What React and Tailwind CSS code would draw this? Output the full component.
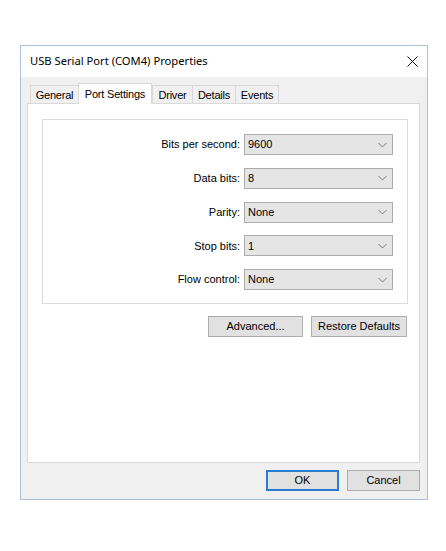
const ROWS = [
  { label: 'Bits per second:', value: '9600' },
  { label: 'Data bits:', value: '8' },
  { label: 'Parity:', value: 'None' },
  { label: 'Stop bits:', value: '1' },
  { label: 'Flow control:', value: 'None' },
];

const TABS = [
  { name: 'General', w: 'w-[48px]' },
  { name: 'Port Settings', w: 'w-[74px]' },
  { name: 'Driver', w: 'w-[40px]' },
  { name: 'Details', w: 'w-[43px]' },
  { name: 'Events', w: 'w-[44px]' },
];

function Chevron() {
  return (
    <svg width="9" height="6" viewBox="0 0 9 6" fill="none" stroke="#7a7a7a" strokeWidth="1">
      <polyline points="0.5 1 4.5 5 8.5 1" />
    </svg>
  );
}

function Combo({ value }) {
  return (
    <div className="w-[149px] h-[21px] bg-[#e5e5e5] border border-[#acacac] flex items-center pl-[3px] pr-[5px]">
      <span className="flex-1">{value}</span>
      <Chevron />
    </div>
  );
}

function Button({ children, width, primary }) {
  return (
    <div
      className={`h-[21px] ${width} bg-[#e1e1e1] flex items-center justify-center ${
        primary ? 'border-2 border-[#2b7bd0]' : 'border border-[#adadad]'
      }`}
    >
      {children}
    </div>
  );
}

export default function App() {
  return (
    <div className="w-[446px] h-[551px] bg-white pt-[45px] pl-[20px] text-black">
      <div className="w-[408px] h-[455px] border border-[#a9c3df] bg-[#f0f0f0] flex flex-col">
        <div className="h-[31px] bg-white flex items-center pl-[9px] pr-[9px] shrink-0">
          <span className="flex-1 text-[11.2px]" style={{ fontFamily: '"Noto Sans", sans-serif' }}>
            USB Serial Port (COM4) Properties
          </span>
          <svg width="11" height="11" viewBox="0 0 11 11" stroke="#111" strokeWidth="1">
            <line x1="0.5" y1="0.5" x2="10.5" y2="10.5" />
            <line x1="10.5" y1="0.5" x2="0.5" y2="10.5" />
          </svg>
        </div>

        <div
          className="flex-1 flex flex-col pl-[6px] pr-[7px] text-[11px]"
          style={{ fontFamily: '"Liberation Sans", Arial, sans-serif' }}
        >
          <div className="h-[26px] flex items-end pl-[3px] shrink-0">
            {TABS.map((t) =>
              t.name === 'Port Settings' ? (
                <div
                  key={t.name}
                  className={`${t.w} h-[21px] -mb-px bg-white border border-b-0 border-[#d9d9d9] flex justify-center pt-[2px] relative z-10 tracking-[-0.2px]`}
                >
                  {t.name}
                </div>
              ) : (
                <div
                  key={t.name}
                  className={`${t.w} h-[18px] pt-px bg-[#f0f0f0] border border-b-0 border-r-0 border-[#d9d9d9] last:border-r flex items-center justify-center tracking-[-0.2px]`}
                >
                  {t.name}
                </div>
              )
            )}
          </div>

          <div className="h-[360px] bg-white border border-[#d9d9d9] flex flex-col pl-[14px] pr-[11px] pt-[15px] shrink-0">
            <div className="h-[185px] border border-[#dcdcdc] flex flex-col gap-[12.75px] pt-[14px] pr-[14px]">
              {ROWS.map((r) => (
                <div key={r.label} className="flex items-center justify-end gap-[4px]">
                  <span>{r.label}</span>
                  <Combo value={r.value} />
                </div>
              ))}
            </div>
            <div className="flex justify-end gap-[8px] mt-[12px] pr-px">
              <Button width="w-[95px]">Advanced...</Button>
              <Button width="w-[96px]">Restore Defaults</Button>
            </div>
          </div>

          <div className="flex justify-end gap-[8px] mt-[7px]">
            <Button width="w-[73px]" primary>
              OK
            </Button>
            <Button width="w-[73px]">Cancel</Button>
          </div>
        </div>
      </div>
    </div>
  );
}
